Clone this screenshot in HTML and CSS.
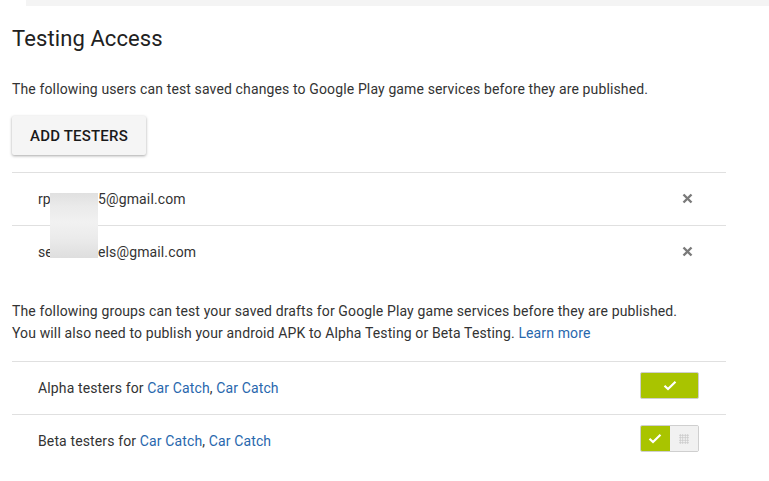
FILE: index.html
```html
<!DOCTYPE html>
<html>
<head>
<meta charset="utf-8">
<link rel="stylesheet" href="styles.css">
</head>
<body>
<div class="topbar"></div>
<main class="page">
  <h1 class="title">Testing Access</h1>
  <p class="intro">The following users can test saved changes to Google Play game services before they are published.</p>
  <button class="btn">ADD TESTERS</button>

  <ul class="list users">
    <li class="row">
      <span class="label"><span class="masked">rp</span>5@gmail.com</span>
      <span class="remove" aria-label="remove">
        <svg width="11" height="11" viewBox="0 0 11 11"><path d="M1.5 1.5 L9.5 9.5 M9.5 1.5 L1.5 9.5" stroke="#7a7a7a" stroke-width="2.4" stroke-linecap="butt"/></svg>
      </span>
    </li>
    <li class="row last">
      <span class="label"><span class="masked">se</span>els@gmail.com</span>
      <span class="remove" aria-label="remove">
        <svg width="11" height="11" viewBox="0 0 11 11"><path d="M1.5 1.5 L9.5 9.5 M9.5 1.5 L1.5 9.5" stroke="#7a7a7a" stroke-width="2.4" stroke-linecap="butt"/></svg>
      </span>
    </li>
    <li class="redact" aria-hidden="true"></li>
  </ul>

  <p class="groups">The following groups can test your saved drafts for Google Play game services before they are published.<br>You will also need to publish your android APK to Alpha Testing or Beta Testing. <a class="link" href="#">Learn more</a></p>

  <ul class="list">
    <li class="row">
      <span class="label">Alpha testers for <a class="link" href="#">Car Catch</a>, <a class="link" href="#">Car Catch</a></span>
      <span class="toggle on">
        <svg width="14" height="11" viewBox="0 0 14 11"><path d="M1.5 5.8 L5 9 L12.5 1.8" fill="none" stroke="#fff" stroke-width="2.2"/></svg>
      </span>
    </li>
    <li class="row last">
      <span class="label">Beta testers for <a class="link" href="#">Car Catch</a>, <a class="link" href="#">Car Catch</a></span>
      <span class="toggle split">
        <span class="half green">
          <svg width="14" height="11" viewBox="0 0 14 11"><path d="M1.5 5.8 L5 9 L12.5 1.8" fill="none" stroke="#fff" stroke-width="2.2"/></svg>
        </span>
        <span class="half grey"><span class="grip"></span></span>
      </span>
    </li>
  </ul>
</main>
</body>
</html>
```

FILE: styles.css
```css
* { box-sizing: border-box; }
html, body { margin: 0; padding: 0; background: #fff; }
body {
  font-family: Roboto, "Liberation Sans", Arial, sans-serif;
  color: #333;
  font-size: 14px;
  letter-spacing: 0.13px;
}
.topbar {
  height: 6px;
  margin-left: 26px;
  background: #f4f4f4;
}
.page {
  width: 726px;
  padding-left: 12px;
}
.title {
  margin: 19px 0 0;
  font-size: 22px;
  line-height: 28px;
  font-weight: 400;
  letter-spacing: 0.1px;
  color: #212121;
}
.intro {
  margin: 26px 0 0;
  line-height: 20px;
}
.btn {
  display: block;
  margin-top: 17px;
  height: 39px;
  padding: 0 18px;
  border: none;
  border-radius: 2px;
  background: #f5f5f5;
  box-shadow: 0 1px 3px rgba(0,0,0,0.35);
  font-family: Roboto, "Liberation Sans", Arial, sans-serif;
  font-size: 15px;
  font-weight: 500;
  letter-spacing: 0.2px;
  color: #1a1a1a;
}
.list {
  list-style: none;
  margin: 17px 0 0;
  padding: 0;
  position: relative;
}
.row {
  display: flex;
  align-items: center;
  justify-content: space-between;
  height: 53px;
  border-top: 1px solid #e0e0e0;
  padding-left: 26px;
}
.label { line-height: 20px; }
.masked { display: inline-block; width: 60px; }
.remove {
  display: flex;
  margin-right: 33px;
  margin-top: -1px;
}
.redact {
  position: absolute;
  left: 38px;
  top: 21px;
  width: 48px;
  height: 65px;
  background: linear-gradient(180deg, #e0e0e0 0%, #eaeaea 20%, #f1f1f1 45%, #ebebeb 70%, #dedede 100%);
}
.groups {
  margin: 22px 0 0;
  line-height: 22px;
}
.link { color: #2867ad; text-decoration: none; }
.groups + .list { margin-top: 17px; }
.toggle {
  display: flex;
  width: 59px;
  height: 27px;
  margin-right: 27px;
  margin-top: -5px;
  border: 1px solid #cfcfcf;
  border-radius: 2px;
  overflow: hidden;
}
.toggle.on {
  background: #a9c400;
  align-items: center;
  justify-content: center;
}
.half {
  flex: 1;
  display: flex;
  align-items: center;
  justify-content: center;
}
.green { background: #a9c400; }
.grey { background: #f1f1f1; }
.grip {
  width: 10px;
  height: 10px;
  background-image: radial-gradient(circle, #c8c8c8 0.8px, transparent 1px);
  background-size: 2.5px 2.5px;
}
```
